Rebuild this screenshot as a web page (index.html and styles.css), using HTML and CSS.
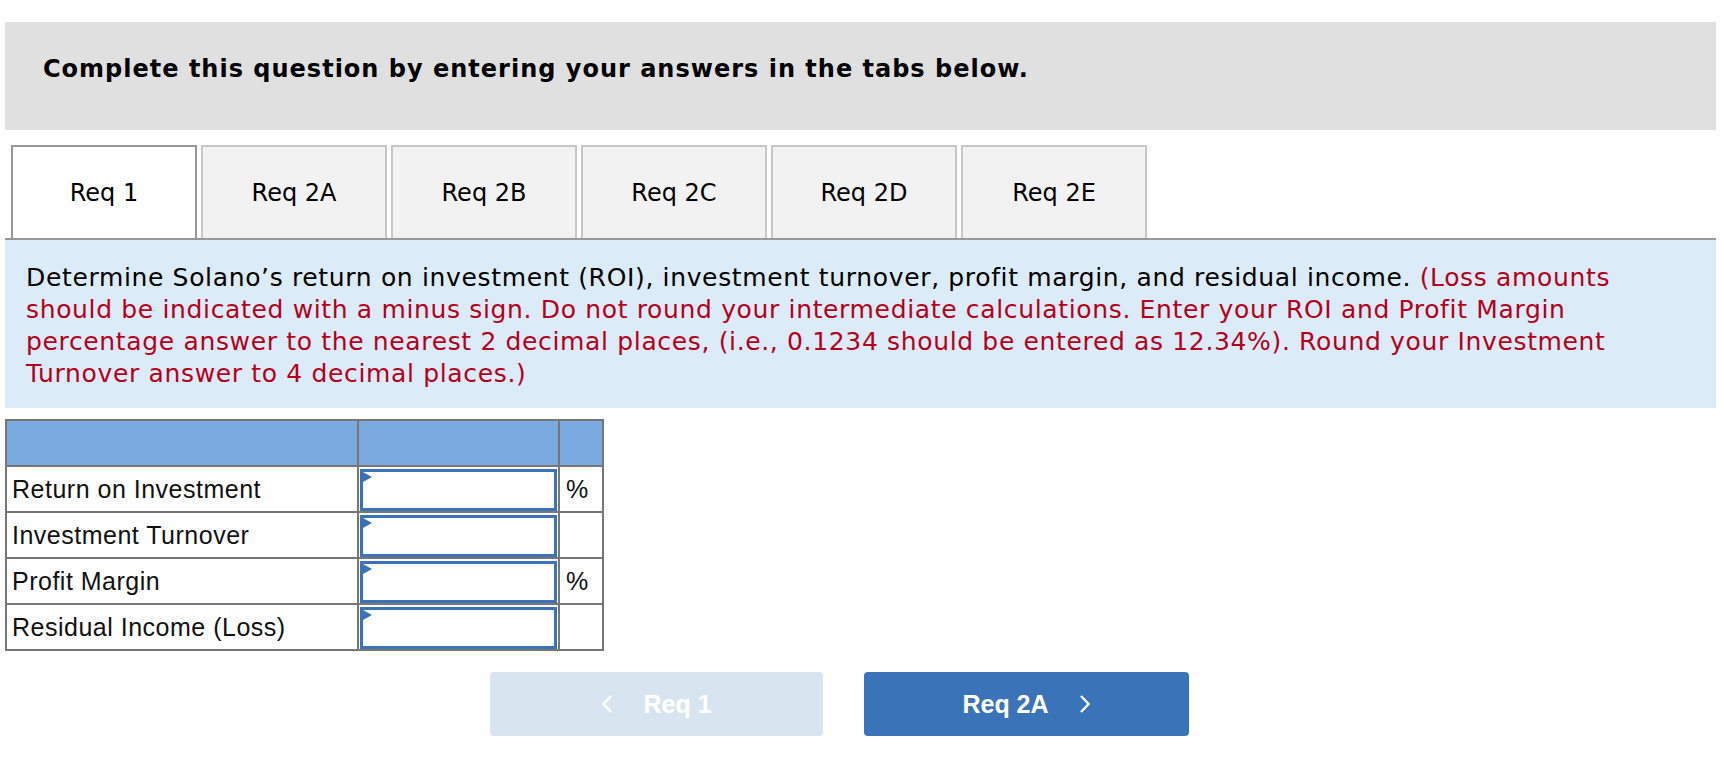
FILE: index.html
```html
<!DOCTYPE html>
<html>

<head>
    <meta charset="utf-8">
    <link rel="stylesheet" href="styles.css">
</head>

<body>
    <div class="instructions">Complete this question by entering your answers in the tabs below.</div>

    <div class="tabs">
        <div class="tab active">Req 1</div>
        <div class="tab">Req 2A</div>
        <div class="tab">Req 2B</div>
        <div class="tab">Req 2C</div>
        <div class="tab">Req 2D</div>
        <div class="tab">Req 2E</div>
    </div>

    <div class="prompt">
        Determine Solano’s return on investment (ROI), investment turnover, profit margin, and residual income.
        <span class="hint">(Loss amounts should be indicated with a minus sign. Do not round your intermediate calculations. Enter your ROI and Profit Margin percentage answer to the nearest 2 decimal places, (i.e., 0.1234 should be entered as 12.34%). Round your Investment Turnover answer to 4 decimal places.)</span>
    </div>

    <table class="answers">
        <tr class="head">
            <td class="label"></td>
            <td class="entry"></td>
            <td class="unit"></td>
        </tr>
        <tr>
            <td class="label">Return on Investment</td>
            <td class="entry"><div class="answer"><input type="text"></div></td>
            <td class="unit">%</td>
        </tr>
        <tr>
            <td class="label">Investment Turnover</td>
            <td class="entry"><div class="answer"><input type="text"></div></td>
            <td class="unit"></td>
        </tr>
        <tr>
            <td class="label">Profit Margin</td>
            <td class="entry"><div class="answer"><input type="text"></div></td>
            <td class="unit">%</td>
        </tr>
        <tr>
            <td class="label">Residual Income (Loss)</td>
            <td class="entry"><div class="answer"><input type="text"></div></td>
            <td class="unit"></td>
        </tr>
    </table>

    <div class="nav">
        <div class="nav-btn prev">
            <svg width="12" height="20" viewBox="0 0 12 20"><polyline points="10,2 2.5,10 10,18" fill="none" stroke="#fff" stroke-width="2.4"/></svg>
            <span>Req 1</span>
        </div>
        <div class="nav-btn next">
            <span>Req 2A</span>
            <svg width="12" height="20" viewBox="0 0 12 20"><polyline points="2,2 9.5,10 2,18" fill="none" stroke="#fff" stroke-width="2.4"/></svg>
        </div>
    </div>
</body>

</html>
```

FILE: styles.css
```css
body {
    margin: 22px 8px 0 5px;
    font-family: "DejaVu Sans", Verdana, sans-serif;
    color: #000;
    background-color: #fff;
}

.instructions {
    box-sizing: border-box;
    height: 108px;
    padding: 32px 38px 0;
    background-color: #e0e0e0;
    font-size: 24px;
    font-weight: bold;
    letter-spacing: 1px;
    line-height: 30px;
}

.tabs {
    display: flex;
    gap: 4px;
    margin-top: 15px;
    padding-left: 6px;
    border-bottom: 2px solid #999;
}

.tab {
    box-sizing: border-box;
    width: 186px;
    height: 93px;
    display: flex;
    align-items: center;
    justify-content: center;
    background-color: #f2f2f2;
    border: 2px solid #c6c6c6;
    border-bottom: none;
    font-size: 24px;
}

.tab.active {
    background-color: #fff;
    border-color: #999;
}

.prompt {
    padding: 22px 21px 18px;
    background-color: #dcebf8;
    font-size: 25px;
    letter-spacing: 0.65px;
    line-height: 32px;
}

.prompt .hint {
    color: #b3001b;
}

table.answers {
    margin-top: 11px;
    border-collapse: collapse;
    border: 2px solid #777;
    font-family: "Liberation Sans", Arial, sans-serif;
    font-size: 25px;
    letter-spacing: 0.5px;
    color: #111;
}

.answers td {
    height: 43px;
    padding: 0;
    border: 2px solid #777;
}

.answers td.label {
    width: 345px;
    padding-left: 5px;
}

.answers td.entry {
    width: 197px;
    padding: 1px 1px 0;
}

.answers td.unit {
    width: 36px;
    padding-left: 6px;
}

.answers tr.head td {
    background-color: #7aaae0;
}

.answer {
    position: relative;
}

.answer::before {
    content: "";
    position: absolute;
    top: 3px;
    left: 3px;
    border-left: 9px solid #3b73b9;
    border-top: 5px solid transparent;
    border-bottom: 5px solid transparent;
}

.answer input {
    display: block;
    box-sizing: border-box;
    width: 100%;
    height: 42px;
    margin: 0;
    border: 3px solid #3b73b9;
    background-color: #fff;
    font-size: 22px;
    outline: none;
}

.nav {
    display: flex;
    gap: 41px;
    margin-top: 21px;
    padding-left: 485px;
}

.nav-btn {
    height: 64px;
    display: flex;
    align-items: center;
    justify-content: center;
    gap: 30px;
    border-radius: 4px;
    color: #fff;
    font-family: "Liberation Sans", Arial, sans-serif;
    font-size: 25px;
    font-weight: bold;
}

.nav-btn.prev {
    width: 333px;
    background-color: #d9e4f1;
}

.nav-btn.next {
    width: 325px;
    background-color: #3b73b9;
}
```
